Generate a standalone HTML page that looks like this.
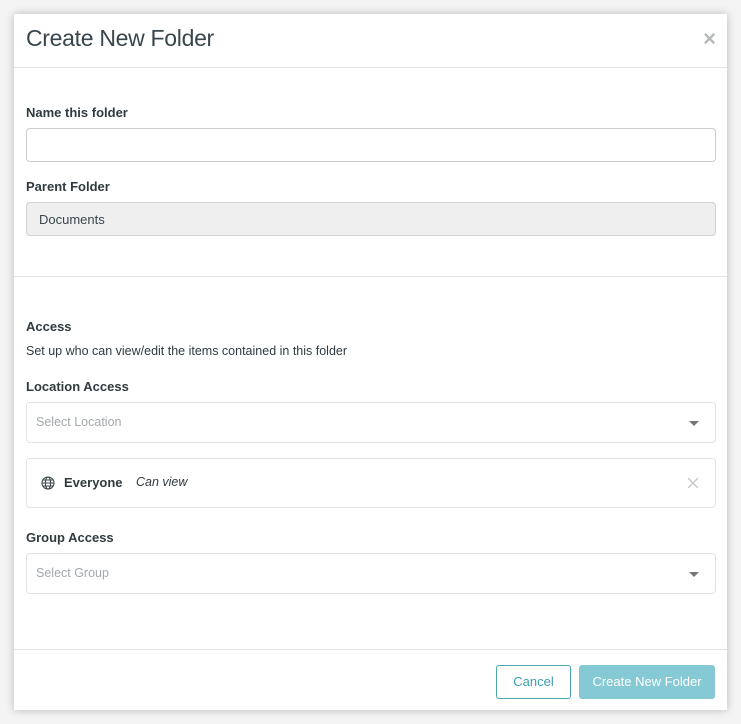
<!DOCTYPE html>
<html><head><meta charset="utf-8"><style>
*{box-sizing:border-box;margin:0;padding:0}
body{width:741px;height:724px;background:#f4f4f4;font-family:"Liberation Sans",sans-serif;position:relative;overflow:hidden;color:#2f3b40}
.m{position:absolute;left:14px;top:14px;width:713px;height:696px;background:#fff;box-shadow:0 0 8px rgba(0,0,0,.25)}
.a{position:absolute}
.hr{position:absolute;left:0;width:713px;height:1px;background:#e2e5e6}
.lbl{position:absolute;left:12px;font-size:13px;font-weight:bold;color:#2f3b40}
.box{position:absolute;left:12px;width:690px;border:1px solid #d6dadc;border-radius:4px;background:#fff}
.ph{position:absolute;left:9px;font-size:12.5px;color:#a3a9ac}
.car{position:absolute;right:16px;top:18px;width:0;height:0;border-left:5px solid transparent;border-right:5px solid transparent;border-top:5px solid #777}
</style></head><body>
<div class="m">
<div class="a" style="left:12px;top:11px;font-size:23px;color:#38474d;letter-spacing:-0.3px">Create New Folder</div>
<div class="a" style="right:11px;top:12px;font-size:22px;color:#b5b9bb;font-weight:bold">×</div>
<div class="hr" style="top:53px"></div>
<div class="lbl" style="top:91px">Name this folder</div>
<div class="box" style="top:114px;height:34px;border-color:#c9cdd0"></div>
<div class="lbl" style="top:165px">Parent Folder</div>
<div class="box" style="top:188px;height:34px;background:#efefef;border-color:#cfd3d5"><span class="a" style="left:12px;top:9px;font-size:13px;color:#3a464b">Documents</span></div>
<div class="hr" style="top:262px"></div>
<div class="lbl" style="top:305px">Access</div>
<div class="a" style="left:12px;top:330px;font-size:12.5px;color:#2f3b40">Set up who can view/edit the items contained in this folder</div>
<div class="lbl" style="top:365px">Location Access</div>
<div class="box" style="top:388px;height:41px;border-color:#e1e4e5"><span class="ph" style="top:12px">Select Location</span><span class="car"></span></div>
<div class="box" style="top:444px;height:50px;border-color:#e1e4e5">
<svg class="a" style="left:14px;top:17px" width="14" height="14" viewBox="0 0 14 14" fill="none" stroke="#3a464b" stroke-width="1.1"><circle cx="7" cy="7" r="6"/><ellipse cx="7" cy="7" rx="2.6" ry="6"/><path d="M1 7h12M2 4h10M2 10h10"/></svg>
<span class="a" style="left:37px;top:16px;font-size:13px;font-weight:bold;color:#2f3b40">Everyone</span>
<span class="a" style="left:109px;top:16px;font-size:12.5px;font-style:italic;color:#2f3b40">Can view</span>
<svg class="a" style="right:16px;top:18px" width="12" height="12" viewBox="0 0 12 12" stroke="#c3c7c9" stroke-width="1.3"><path d="M1 1l10 10M11 1L1 11"/></svg>
</div>
<div class="lbl" style="top:516px">Group Access</div>
<div class="box" style="top:539px;height:41px;border-color:#e1e4e5"><span class="ph" style="top:12px">Select Group</span><span class="car"></span></div>
<div class="hr" style="top:635px"></div>
<div class="a" style="left:482px;top:651px;width:75px;height:34px;border:1px solid #4aa7b6;border-radius:3px;color:#3d9fae;font-size:13px;text-align:center;line-height:32px">Cancel</div>
<div class="a" style="left:565px;top:651px;width:136px;height:34px;background:#85c9d4;border-radius:3px;color:#fff;font-size:13px;text-align:center;line-height:34px">Create New Folder</div>
</div>
</body></html>
